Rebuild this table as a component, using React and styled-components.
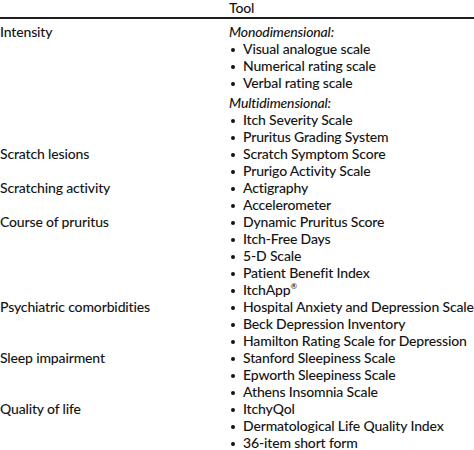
import React from "react";
import styled, { createGlobalStyle } from "styled-components";

const GlobalStyle = createGlobalStyle`
  html, body {
    margin: 0;
    padding: 0;
    background: #ffffff;
  }
  body {
    font-family: "Lato", "Liberation Sans", sans-serif;
    color: #141414;
  }
`;

const data = [
  {
    label: "Intensity",
    groups: [
      {
        title: "Monodimensional:",
        items: ["Visual analogue scale", "Numerical rating scale", "Verbal rating scale"],
      },
      {
        title: "Multidimensional:",
        items: ["Itch Severity Scale", "Pruritus Grading System"],
      },
    ],
  },
  {
    label: "Scratch lesions",
    groups: [{ items: ["Scratch Symptom Score", "Prurigo Activity Scale"] }],
  },
  {
    label: "Scratching activity",
    groups: [{ items: ["Actigraphy", "Accelerometer"] }],
  },
  {
    label: "Course of pruritus",
    groups: [
      {
        items: [
          "Dynamic Pruritus Score",
          "Itch-Free Days",
          "5-D Scale",
          "Patient Benefit Index",
          "ItchApp®",
        ],
      },
    ],
  },
  {
    label: "Psychiatric comorbidities",
    groups: [
      {
        items: [
          "Hospital Anxiety and Depression Scale",
          "Beck Depression Inventory",
          "Hamilton Rating Scale for Depression",
        ],
      },
    ],
  },
  {
    label: "Sleep impairment",
    groups: [
      {
        items: [
          "Stanford Sleepiness Scale",
          "Epworth Sleepiness Scale",
          "Athens Insomnia Scale",
        ],
      },
    ],
  },
  {
    label: "Quality of life",
    groups: [
      {
        items: ["ItchyQol", "Dermatological Life Quality Index", "36-item short form"],
      },
    ],
  },
];

const Table = styled.div`
  width: 474px;
  font-size: 14px;
  line-height: 17px;
  letter-spacing: -0.15px;
  font-weight: 500;
`;

const HeaderRow = styled.div`
  display: grid;
  grid-template-columns: 229px 1fr;
  height: 17px;
  line-height: 15px;
  border-bottom: 2px solid #1e1e1e;
`;

const Body = styled.div`
  padding-top: 4px;
`;

const Row = styled.div`
  display: grid;
  grid-template-columns: 229px 1fr;
`;

const Label = styled.div`
  white-space: nowrap;
`;

const Group = styled.div`
  margin-top: ${(p) => (p.$first ? "0" : "3px")};
`;

const GroupTitle = styled.div`
  font-style: italic;
`;

const List = styled.ul`
  list-style: none;
  margin: 0;
  padding: 0;
`;

const Item = styled.li`
  position: relative;
  padding-left: 14px;
  white-space: nowrap;

  &::before {
    content: "";
    position: absolute;
    left: 2px;
    top: 8px;
    width: 4px;
    height: 4px;
    border-radius: 50%;
    background: #141414;
  }
`;

const Sup = styled.sup`
  font-size: 8px;
  line-height: 0;
  vertical-align: 6px;
`;

const renderItem = (text) =>
  text.endsWith("®") ? (
    <>
      {text.slice(0, -1)}
      <Sup>®</Sup>
    </>
  ) : (
    text
  );

const App = () => {
  return (
    <>
      <GlobalStyle />
      <Table>
        <HeaderRow>
          <div />
          <div>Tool</div>
        </HeaderRow>
        <Body>
          {data.map((row) => (
            <Row key={row.label}>
              <Label>{row.label}</Label>
              <div>
                {row.groups.map((g, i) => (
                  <Group key={i} $first={i === 0}>
                    {g.title && <GroupTitle>{g.title}</GroupTitle>}
                    <List>
                      {g.items.map((it) => (
                        <Item key={it}>{renderItem(it)}</Item>
                      ))}
                    </List>
                  </Group>
                ))}
              </div>
            </Row>
          ))}
        </Body>
      </Table>
    </>
  );
};

export default App;
